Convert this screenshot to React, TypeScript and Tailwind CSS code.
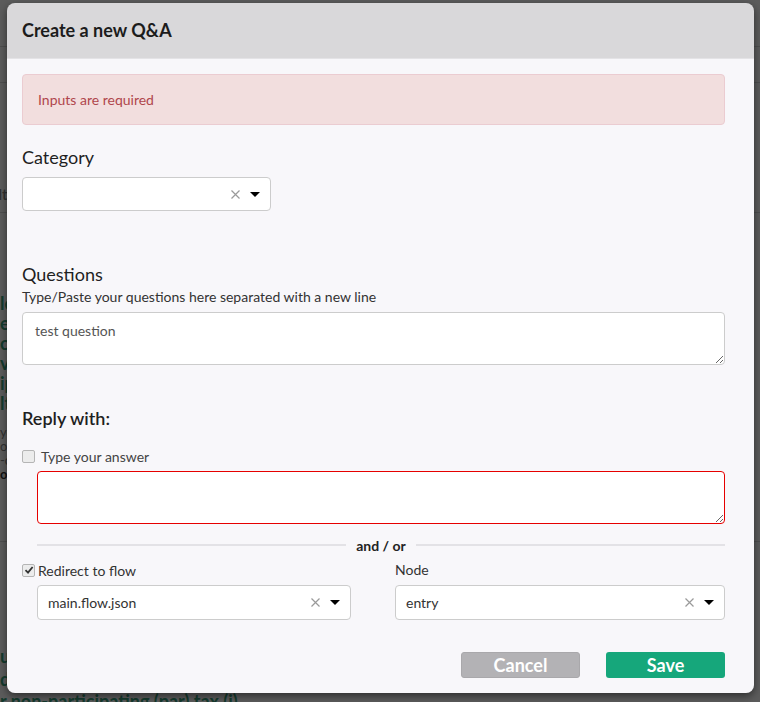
import { ReactNode } from "react";

// Page sitting behind the modal; mostly hidden by the backdrop.
function PageBehind() {
  const green = "text-[18px] font-bold leading-[20px] text-[#3aa57f]";
  return (
    <div className="flex h-full flex-col font-['Lato',sans-serif]">
      <div className="h-[47px] border-b border-[#dcdcdc]" />
      <div className="h-[36px] border-b border-[#dcdcdc]" />
      <div className="mt-[100px] h-[30px] border-b border-[#dcdcdc] text-[15px] font-semibold text-[#888]">
        <span className="-ml-[2px]">Its</span>
      </div>
      <div className="mt-[80px] flex flex-col">
        <span className={green}>lead time</span>
        <span className={green}>eecording</span>
        <span className={green}>ccount</span>
        <span className={green}>vision</span>
        <span className={green}>ipsum</span>
        <span className={green}>ltd item</span>
      </div>
      <div className="mt-[12px] flex flex-col text-[13px] leading-[14px] text-[#888]">
        <span>yearly</span>
        <span>occurs</span>
        <span>-core</span>
        <span className="font-bold text-[#333]">oodle</span>
      </div>
      <div className="mt-[60px] border-t border-[#dcdcdc]" />
      <div className="-mb-[9px] mt-auto flex flex-col">
        <span className={green}>upfront</span>
        <span className={`${green} mt-[3px]`}>defer</span>
        <span className="mt-[2px] whitespace-nowrap text-[18px] font-bold leading-[20px] text-[#3aa57f]">
          r non-participating (par) tax (i)
        </span>
      </div>
    </div>
  );
}

function Checkbox({ checked }: { checked?: boolean }) {
  return (
    <span className="flex h-[13px] w-[13px] items-center justify-center rounded-[2px] border border-[#b5b5b5] bg-[#ececec]">
      {checked && (
        <svg width="10" height="10" viewBox="0 0 10 10">
          <path d="M1.5 5.2 L4 7.6 L8.6 2" fill="none" stroke="#333" strokeWidth="1.8" />
        </svg>
      )}
    </span>
  );
}

function Select({ value, className }: { value?: string; className?: string }) {
  return (
    <div
      className={`flex items-center rounded-[4px] border border-[#cccccc] bg-white pl-[10px] pr-[10px] ${className ?? ""}`}
    >
      <span className="flex-1 text-[14px] text-[#333]">{value}</span>
      <svg width="9" height="9" viewBox="0 0 9 9">
        <path d="M0.5 0.5 L8.5 8.5 M8.5 0.5 L0.5 8.5" stroke="#9a9a9a" strokeWidth="1.2" />
      </svg>
      <span className="ml-[10px] h-0 w-0 border-x-[5px] border-t-[5px] border-x-transparent border-t-black" />
    </div>
  );
}

function Label({ children, className }: { children: ReactNode; className?: string }) {
  return <div className={`text-[18px] leading-[22px] text-[#1f1f1f] ${className ?? ""}`}>{children}</div>;
}

export default function App() {
  return (
    <div className="relative h-[702px] w-[760px] overflow-hidden bg-white font-['Lato',sans-serif]">
      <PageBehind />
      <div className="absolute inset-0 bg-black/[0.64]" />

      <div className="absolute left-[7px] top-[3px] w-[747px] rounded-[8px] shadow-[0_3px_9px_rgba(0,0,0,0.5)]">
        <div className="flex h-[56px] items-center rounded-t-[8px] border-b border-[#e4e3e6] bg-[#d9d8da] px-[15px]">
          <h4 className="text-[18px] font-bold text-[#1c1c1c]">Create a new Q&amp;A</h4>
        </div>

        <div className="rounded-b-[8px] bg-[#f8f7fa] pb-[15px] pl-[15px] pr-[29px] pt-[15px]">
          <div className="flex h-[51px] items-center rounded-[4px] border border-[#ebccd1] bg-[#f2dede] px-[15px] text-[14px] text-[#b0464c]">
            Inputs are required
          </div>

          <Label className="mt-[21px]">Category</Label>
          <Select className="mt-[9px] h-[34px] w-[249px]" />

          <Label className="mt-[52px]">Questions</Label>
          <div className="mt-[4px] text-[14px] leading-[16px] text-[#333]">
            Type/Paste your questions here separated with a new line
          </div>
          <textarea
            readOnly
            value="test question"
            className="mt-[7px] block h-[53px] w-full rounded-[4px] border border-[#cccccc] bg-white px-[12px] py-[7px] text-[14px] text-[#555] outline-none"
          />

          <Label className="mt-[42px] font-semibold">Reply with:</Label>
          <div className="mt-[19px] flex h-[16px] items-center gap-[6px] text-[14px] text-[#444]">
            <Checkbox />
            <span>Type your answer</span>
          </div>
          <textarea
            readOnly
            className="ml-[15px] mt-[7px] block h-[53px] w-[688px] rounded-[4px] border border-[#e60000] bg-white px-[12px] py-[8px] text-[14px] outline-none"
          />

          <div className="ml-[15px] mt-[13px] flex h-[16px] items-center">
            <div className="h-[2px] flex-1 bg-[#e3e2e6]" />
            <span className="px-[10px] text-[14px] font-bold text-[#222]">and / or</span>
            <div className="h-[2px] flex-1 bg-[#e3e2e6]" />
          </div>

          <div className="mt-[9px] flex gap-[44px]">
            <div className="w-[329px]">
              <div className="flex h-[16px] items-center gap-[3px] text-[14px] text-[#333]">
                <Checkbox checked />
                <span>Redirect to flow</span>
              </div>
              <Select value="main.flow.json" className="ml-[15px] mt-[7px] h-[35px]" />
            </div>
            <div className="flex-1">
              <div className="h-[16px] text-[14px] leading-[16px] text-[#333]">Node</div>
              <Select value="entry" className="mt-[7px] h-[35px]" />
            </div>
          </div>

          <div className="mt-[32px] flex justify-end gap-[26px]">
            <button className="h-[26px] w-[119px] rounded-[3px] border border-[#a9a8ab] bg-[#b3b2b5] text-[18px] font-bold leading-none text-white">
              Cancel
            </button>
            <button className="h-[26px] w-[119px] rounded-[3px] bg-[#16a77b] text-[18px] font-bold leading-none text-white">
              Save
            </button>
          </div>
        </div>
      </div>
    </div>
  );
}
